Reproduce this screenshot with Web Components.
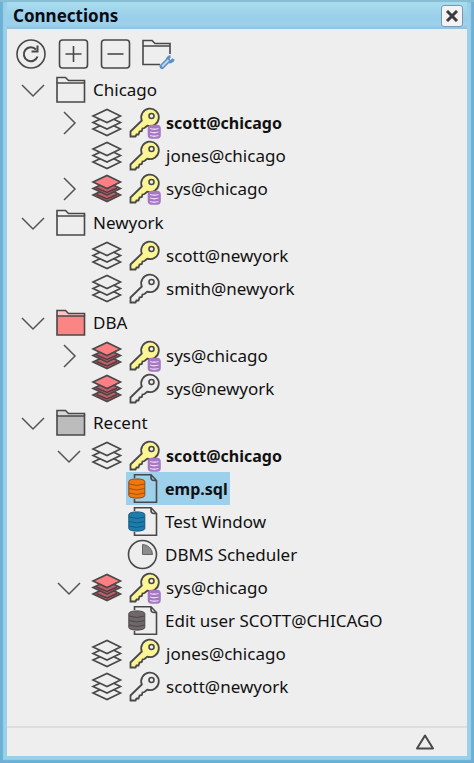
<!DOCTYPE html>
<html lang="en">
<head>
<meta charset="utf-8">
<title>Connections</title>
<style>
  body {
    margin: 0;
    font-family: "Noto Sans", "Open Sans", sans-serif;
    font-size: 17px;
    color: #111;
  }
</style>
</head>
<body>

<dock-panel heading="Connections">
  <tool-bar slot="tools"></tool-bar>

  <tree-item icons="folder" label="Chicago" open>
    <tree-item icons="layers key-session" label="scott@chicago" toggle bold></tree-item>
    <tree-item icons="layers key" label="jones@chicago"></tree-item>
    <tree-item icons="layers-red key-session" label="sys@chicago" toggle></tree-item>
  </tree-item>

  <tree-item icons="folder" label="Newyork" open>
    <tree-item icons="layers key" label="scott@newyork"></tree-item>
    <tree-item icons="layers key-off" label="smith@newyork"></tree-item>
  </tree-item>

  <tree-item icons="folder-red" label="DBA" open>
    <tree-item icons="layers-red key-session" label="sys@chicago" toggle></tree-item>
    <tree-item icons="layers-red key-off" label="sys@newyork"></tree-item>
  </tree-item>

  <tree-item icons="folder-grey" label="Recent" open>
    <tree-item icons="layers key-session" label="scott@chicago" open bold>
      <tree-item icons="file-orange" label="emp.sql" bold selected></tree-item>
      <tree-item icons="file-blue" label="Test Window"></tree-item>
      <tree-item icons="clock" label="DBMS Scheduler"></tree-item>
    </tree-item>
    <tree-item icons="layers-red key-session" label="sys@chicago" open>
      <tree-item icons="file-grey" label="Edit user SCOTT@CHICAGO"></tree-item>
    </tree-item>
    <tree-item icons="layers key" label="jones@chicago"></tree-item>
    <tree-item icons="layers key-off" label="scott@newyork"></tree-item>
  </tree-item>
</dock-panel>

<script>
  const folder = fill => `
    <path d="M1 8V2.500H9.500L12.500 5.500H28.500V8" fill="${fill.tab}"/>
    <path d="M1 8H28.500V27H1Z" fill="${fill.body}"/>`;

  const layers = (top, rest, edge) => `
    <path d="M1 21L15 14.500L28.500 21L15 27.500Z" fill="${rest}"/>
    <path d="M4.500 20.500L15 25L25 20.500" stroke="${edge}"/>
    <path d="M1 14.500L15 8L28.500 14.500L15 21Z" fill="${rest}"/>
    <path d="M4.500 14L15 18.500L25 14" stroke="${edge}"/>
    <path d="M1 8L15 1.500L28.500 8L15 14.500Z" fill="${top}"/>`;

  const key = fill => `
    <path d="M12.800 12.500L1.500 23.500V28.500H6.500L7.500 26.500H9.500L10.500 23.500L12.800 23L13.500 20.500L15.500 20L18.200 17.700A8.800 8.800 0 1 0 12.800 12.500Z" fill="${fill}" stroke-width="1.800"/>
    <circle cx="22.500" cy="8" r="2.500" fill="#eee"/>`;

  const session = `
    <rect x="19.500" y="17.500" width="11.500" height="12.500" rx="3" fill="#a678c4" stroke="#a678c4"/>
    <path d="M21 20.500q4.200 1.500 8.500 0M21 24q4.200 1.500 8.500 0M21 27.500q4.200 1.500 8.500 0" stroke="#ead9f3" stroke-width="1.300"/>`;

  const file = (fill, edge, line) => `
    <path d="M6.500 4V.8H23L28.500 6.500V28.200H6.500V25M23 .8V3.500Q23 6.500 26 6.500H28.500"/>
    <path d="M.8 7.500C.8 4 16.800 4 16.800 7.500V21.500C16.800 25 .8 25 .8 21.500Z" fill="${fill}" stroke="${edge}" stroke-width="1"/>
    <path d="M1 10q7.800 3 15.500 0M1 14.500q7.800 3 15.500 0M1 19q7.800 3 15.500 0" stroke="${line}" stroke-width="1"/>`;

  const ICONS = {
    "folder": folder({ tab: "#eee", body: "#eee" }),
    "folder-red": folder({ tab: "#f9c6c8", body: "#fb8585" }),
    "folder-grey": folder({ tab: "#d6d6d6", body: "#bcbcbc" }),
    "layers": layers("#eee", "#eee", "none"),
    "layers-red": layers("#fd7f83", "#c0606a", "#5a3a40"),
    "key": key("#fbf593"),
    "key-off": key("#eee"),
    "key-session": key("#fbf593") + session,
    "file-orange": file("#ee7710", "#8a4a18", "#a8500c"),
    "file-blue": file("#1c7cab", "#14577c", "#0f5d86"),
    "file-grey": file("#6e686a", "#4e494b", "#4a4547"),
    "clock": `<circle cx="14.500" cy="14.500" r="14"/><path d="M14.500 4.500V14.500H24.500A10 10 0 0 0 14.500 4.500Z" fill="#8c8c8c" stroke="#666" stroke-width="1"/>`,
    "refresh": `<circle cx="15" cy="15" r="14"/><path d="M21.500 17.500A7 7 0 1 1 20 10.500" stroke-width="2"/><path d="M21.500 6.500V12.500H15.500" stroke-width="2"/>`,
    "expand": `<rect x="1.500" y="1" width="28" height="28" rx="3"/><path d="M15.500 7V23M7.500 15H23.500"/>`,
    "collapse": `<rect x="1.500" y="1" width="28" height="28" rx="3"/><path d="M7.500 15H23.500"/>`,
    "folder-setup": `<path d="M28 15V4.500H13L10 1.500H1V25.500H18M1 7H28"/>
      <path d="M20 27.500L26 21.500" stroke="#5c8fc4" stroke-width="5" stroke-linecap="round"/>
      <path d="M25.500 22a3.500 3.500 0 0 1 3 -4.500" stroke="#5c8fc4" stroke-width="3"/>
      <path d="M27 23q3 0 4.500 -3" stroke="#5c8fc4" stroke-width="3"/>
      <path d="M20 27.500L26.500 21" stroke="#b9d5f0" stroke-width="2"/>`
  };

  const svg = name =>
    `<svg class="icon" width="30" height="30" viewBox="0 0 30 30" fill="none" stroke="#484848" stroke-width="1.600" overflow="visible" aria-hidden="true">${ICONS[name]}</svg>`;

  class DockPanel extends HTMLElement {
    constructor() {
      super();
      this.attachShadow({ mode: "open" });
    }

    connectedCallback() {
      this.shadowRoot.innerHTML = `
        <style>
          :host {
            display: flex;
            flex-direction: column;
            box-sizing: border-box;
            min-height: 100vh;
            padding: 0 7px 7px;
            background: #9bd0ea;
            border-top: 2px solid #86bfd4;
            box-shadow: inset 3px 0 1px #6cb1d5, inset -3px 0 1px #6cb1d5, inset 0 -3px 1px #6cb1d5;
          }
          header {
            display: flex;
            align-items: center;
            justify-content: space-between;
            height: 27px;
            padding: 0 4px 0 6px;
            background: linear-gradient(#a9dcee, #98cee9 60%, #9fd2ec 85%, #8cc2dc);
          }
          h1 { margin: 0; font-size: 17px; line-height: 27px; color: #0a0a14; }
          header button {
            display: grid;
            place-items: center;
            width: 22px;
            height: 22px;
            padding: 0;
            border: 1px solid #7899a8;
            border-radius: 3px;
            background: #f3f3f3;
          }
          main { flex: 1; background: #eee; }
          .tree { display: flex; flex-direction: column; gap: 1px; }
          footer {
            display: flex;
            align-items: center;
            justify-content: flex-end;
            height: 28px;
            padding-right: 32px;
            background: #eee;
            border-top: 2px solid #dedede;
          }
          footer button { display: flex; padding: 0; border: 0; background: none; }
        </style>
        <header>
          <h1>${this.getAttribute("heading")}</h1>
          <button aria-label="Close">
            <svg width="12" height="12" viewBox="0 0 12 12" stroke="#3c3a40" stroke-width="3"><path d="M1 1L11 11M11 1L1 11"/></svg>
          </button>
        </header>
        <main>
          <slot name="tools"></slot>
          <div class="tree" role="tree"><slot></slot></div>
        </main>
        <footer>
          <button aria-label="Show details">
            <svg width="20" height="16" viewBox="0 0 20 16" fill="none" stroke="#484848" stroke-width="2" stroke-linejoin="round"><path d="M10 1.500L18 14.500H2Z"/></svg>
          </button>
        </footer>
      `;
    }
  }

  class ToolBar extends HTMLElement {
    constructor() {
      super();
      this.attachShadow({ mode: "open" });
    }

    connectedCallback() {
      const tools = [
        ["refresh", "Refresh"],
        ["expand", "Expand all"],
        ["collapse", "Collapse all"],
        ["folder-setup", "Configure folders"]
      ];
      this.shadowRoot.innerHTML = `
        <style>
          :host { display: flex; gap: 12px; padding: 10px 9px 4px; }
          button { display: flex; padding: 0; border: 0; background: none; }
        </style>
        ${tools.map(([icon, title]) => `<button aria-label="${title}">${svg(icon)}</button>`).join("")}
      `;
    }
  }

  class TreeItem extends HTMLElement {
    constructor() {
      super();
      this.attachShadow({ mode: "open" });
    }
    static get observedAttributes() { return ["open", "selected"]; }
    attributeChangedCallback() { if (this.isConnected) this.render(); }
    connectedCallback() { this.render(); }

    render() {
      const open = this.hasAttribute("open");
      const canToggle = open || this.hasAttribute("toggle");
      const label = this.getAttribute("label");
      const chevron = open ? "M1 7L12 18L23 7" : "M7 1L18 12L7 23";

      this.setAttribute("role", "treeitem");
      this.shadowRoot.innerHTML = `
        <style>
          :host { display: block; }
          .row { display: flex; align-items: center; gap: 9px; height: 33px; padding-left: 14px; }
          .toggle { flex: none; display: flex; width: 24px; height: 24px; padding: 0; border: 0; background: none; }
          .item {
            display: flex;
            align-items: center;
            gap: 7px;
            height: 33px;
            padding: 0 2px;
            white-space: nowrap;
          }
          .icon { flex: none; }
          .children { padding-left: 36px; }
          :host([bold]) .label { font-size: 16px; font-weight: bold; }
          :host([selected]) .item { background: #9dd0ea; }
        </style>
        <div class="row">
          ${canToggle
            ? `<button class="toggle" aria-label="${open ? "Collapse" : "Expand"} ${label}">
                <svg width="24" height="24" viewBox="0 0 24 24" fill="none" stroke="#555" stroke-width="1.500"><path d="${chevron}"/></svg>
              </button>`
            : `<span class="toggle"></span>`}
          <div class="item">
            ${this.getAttribute("icons").split(" ").map(svg).join("")}
            <span class="label">${label}</span>
          </div>
        </div>
        <div class="children" role="group" ${open ? "" : "hidden"}><slot></slot></div>
      `;

      const button = this.shadowRoot.querySelector("button");
      if (button) {
        button.addEventListener("click", () => {
          this.toggleAttribute("toggle", true);
          this.toggleAttribute("open");
        });
      }
    }
  }

  customElements.define("dock-panel", DockPanel);
  customElements.define("tool-bar", ToolBar);
  customElements.define("tree-item", TreeItem);
</script>
</body>
</html>
